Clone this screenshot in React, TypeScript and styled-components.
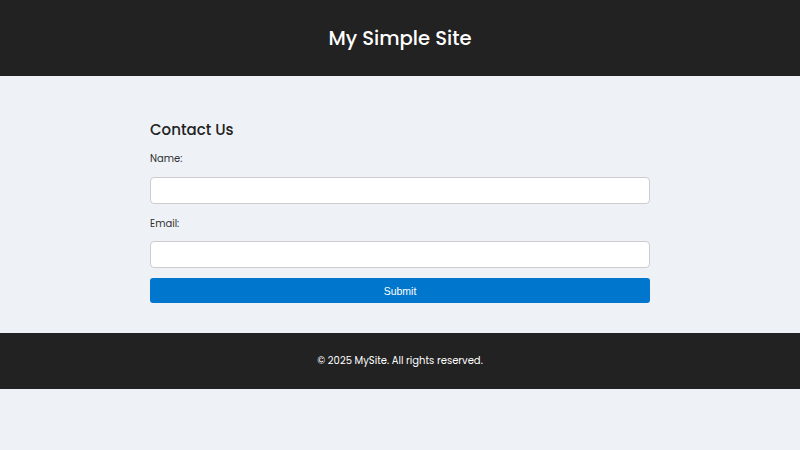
import React from "react";
import styled, { createGlobalStyle } from "styled-components";

const Global = createGlobalStyle`
  html, body { margin: 0; padding: 0; }
  body {
    background: #eef2f7;
    font-family: "Poppins", "Open Sans", sans-serif;
    color: #222;
  }
`;

const Header = styled.header`
  background: #222;
  color: #fff;
  height: 76px;
  display: flex;
  align-items: center;
  justify-content: center;
`;

const Title = styled.h1`
  margin: 0;
  font-size: 19.6px;
  font-weight: 500;
`;

const Main = styled.main`
  padding: 43px 0 30px;
`;

const Container = styled.div`
  width: 500px;
  margin: 0 auto;
`;

const Heading = styled.h2`
  margin: 0 0 10px;
  font-size: 15px;
  font-weight: 500;
  line-height: 22px;
  color: #222;
`;

const Form = styled.form`
  display: flex;
  flex-direction: column;
`;

const Label = styled.label<{ $gap: number }>`
  font-size: 10px;
  line-height: 15px;
  color: #333;
  margin-bottom: ${(p) => p.$gap}px;
`;

const Input = styled.input`
  box-sizing: border-box;
  height: 27px;
  width: 100%;
  border: 1px solid #ccc;
  border-radius: 4px;
  background: #fff;
`;

const Field = styled.div<{ $after: number }>`
  display: flex;
  flex-direction: column;
  margin-bottom: ${(p) => p.$after}px;
`;

const Button = styled.button`
  height: 25px;
  border: none;
  border-radius: 3px;
  background: #0077cc;
  color: #fff;
  font-family: "Liberation Sans", Arial, sans-serif;
  font-size: 10.5px;
  padding: 0;
`;

const Footer = styled.footer`
  background: #222;
  color: #fff;
  height: 56px;
  display: flex;
  align-items: center;
  justify-content: center;
  font-size: 10px;
`;

export default function App() {
  return (
    <>
      <Global />
      <Header>
        <Title>My Simple Site</Title>
      </Header>
      <Main>
        <Container>
          <Heading>Contact Us</Heading>
          <Form onSubmit={(e) => e.preventDefault()}>
            <Field $after={12}>
              <Label htmlFor="name" $gap={11}>Name:</Label>
              <Input id="name" type="text" />
            </Field>
            <Field $after={10}>
              <Label htmlFor="email" $gap={10}>Email:</Label>
              <Input id="email" type="email" />
            </Field>
            <Button type="submit">Submit</Button>
          </Form>
        </Container>
      </Main>
      <Footer>© 2025 MySite. All rights reserved.</Footer>
    </>
  );
}
